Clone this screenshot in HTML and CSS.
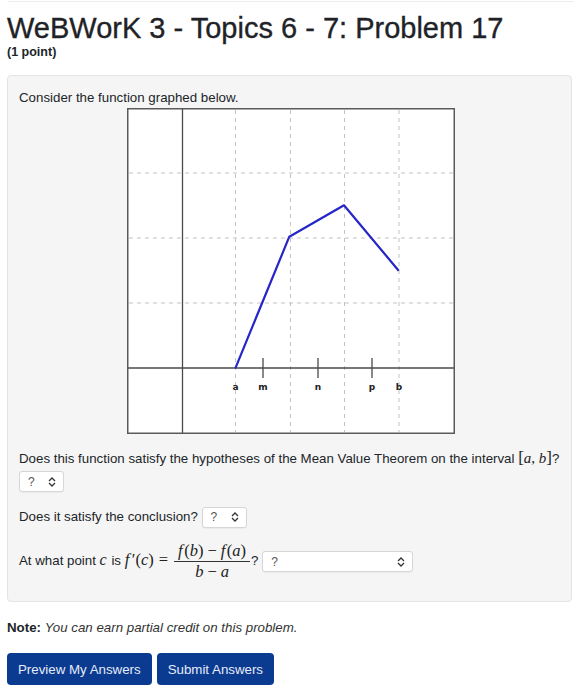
FILE: index.html
```html
<!DOCTYPE html>
<html lang="en">
<head>
<meta charset="utf-8">
<title>WeBWorK 3 - Topics 6 - 7: Problem 17</title>
<link rel="stylesheet" href="styles.css">
</head>
<body>
<div class="topline"></div>
<main class="page">
  <h1 class="title">WeBWorK 3 - Topics 6 - 7: Problem 17</h1>
  <div class="points">(1 point)</div>

  <section class="problem">
    <p class="intro">Consider the function graphed below.</p>

    <div class="graph">
      <svg class="plot" width="328" height="326" viewBox="0 0 328 326">
        <rect x="0" y="0" width="328" height="326" fill="#ffffff"/>
        <g stroke="#c4c4c4" stroke-width="1" stroke-dasharray="4 4" fill="none">
          <line x1="108.5" y1="2" x2="108.5" y2="324"/>
          <line x1="163.5" y1="2" x2="163.5" y2="324"/>
          <line x1="217.5" y1="2" x2="217.5" y2="324"/>
          <line x1="272" y1="2" x2="272" y2="324"/>
          <line x1="2" y1="65" x2="326" y2="65"/>
          <line x1="2" y1="130" x2="326" y2="130"/>
          <line x1="2" y1="195" x2="326" y2="195"/>
        </g>
        <g stroke="#4a4a4a" stroke-width="1.3" fill="none">
          <line x1="55.5" y1="0" x2="55.5" y2="326"/>
          <line x1="0" y1="260" x2="328" y2="260"/>
          <line x1="136" y1="250" x2="136" y2="270"/>
          <line x1="191" y1="250" x2="191" y2="270"/>
          <line x1="245" y1="250" x2="245" y2="270"/>
        </g>
        <polyline points="108.3,260.3 162.3,128.7 217,97.3 271.7,162.7" fill="none" stroke="#2626c8" stroke-width="2.2" stroke-linejoin="round"/>
        <rect x="0.75" y="0.75" width="326.5" height="324.5" fill="none" stroke="#5a5a5a" stroke-width="1.5"/>
        <g class="ticklabels" font-family="DejaVu Sans, sans-serif" font-weight="bold" font-size="9" text-anchor="middle" fill="#222">
          <text x="108.5" y="282">a</text>
          <text x="136" y="282">m</text>
          <text x="191" y="282">n</text>
          <text x="245" y="282">p</text>
          <text x="272" y="282">b</text>
        </g>
      </svg>
    </div>

    <p class="q q1">Does this function satisfy the hypotheses of the Mean Value Theorem on the interval <span class="math"><span class="br">[</span><i>a</i>, <i>b</i><span class="br">]</span></span>?</p>
    <div class="row r1">
      <span class="sel sel-sm"><span class="selval">?</span><svg class="chev" width="8" height="10" viewBox="0 0 8 10"><path d="M1 4 L4 1 L7 4 M1 6 L4 9 L7 6" fill="none" stroke="#333" stroke-width="1.3"/></svg></span>
    </div>

    <p class="q q2">Does it satisfy the conclusion? <span class="sel sel-sm"><span class="selval">?</span><svg class="chev" width="8" height="10" viewBox="0 0 8 10"><path d="M1 4 L4 1 L7 4 M1 6 L4 9 L7 6" fill="none" stroke="#333" stroke-width="1.3"/></svg></span></p>

    <p class="q q3">At what point <i class="mi">c</i> is <span class="math"><i class="fn">f</i><span class="prime">&#8242;</span>(<i>c</i>)<span class="rel">=</span><span class="frac"><span class="num"><i class="fn">f</i>(<i>b</i>)<span class="op">&#8722;</span><i class="fn">f</i>(<i>a</i>)</span><span class="den"><i>b</i><span class="op">&#8722;</span><i>a</i></span></span></span>? <span class="sel sel-lg"><span class="selval">?</span><svg class="chev" width="8" height="10" viewBox="0 0 8 10"><path d="M1 4 L4 1 L7 4 M1 6 L4 9 L7 6" fill="none" stroke="#333" stroke-width="1.3"/></svg></span></p>
  </section>

  <p class="note"><b>Note:</b> <i>You can earn partial credit on this problem.</i></p>

  <div class="buttons">
    <button class="btn" type="button">Preview My Answers</button>
    <button class="btn" type="button">Submit Answers</button>
  </div>
</main>
</body>
</html>
```

FILE: styles.css
```css
html, body {
  margin: 0;
  padding: 0;
  background: #ffffff;
}

body {
  font-family: "Liberation Sans", Arial, sans-serif;
  font-size: 13.3px;
  color: #212529;
}

.topline {
  margin: 1px 8px 0 8px;
  height: 1px;
  background: #ececec;
}

.page {
  padding: 0 10px 0 7px;
}

.title {
  margin: 10px 0 0 0;
  font-size: 29px;
  font-weight: normal;
  line-height: 32px;
  color: #1f2328;
  -webkit-text-stroke: 0.35px #1f2328;
}

.points {
  font-weight: bold;
  font-size: 12.5px;
  line-height: 16px;
}

.problem {
  margin-top: 15px;
  background: #f5f5f5;
  border: 1px solid #e4e4e4;
  border-radius: 4px;
  padding: 13px 11px 21px 11px;
}

.intro {
  margin: 0;
  line-height: 18px;
}

.graph {
  margin-top: 1px;
  display: flex;
  justify-content: center;
  padding-left: 2px;
}

.plot {
  display: block;
}

.q {
  margin: 0;
}

.q1 {
  margin-top: 15px;
  line-height: 18px;
}

.row {
  display: flex;
}

.r1 {
  margin-top: 3px;
}

.q2 {
  margin-top: 14px;
  line-height: 22px;
}

.q3 {
  margin-top: 15px;
}

.math {
  font-family: "Liberation Serif", "Times New Roman", serif;
  font-size: 15px;
  color: #222;
}

.q3 .math {
  font-size: 16.5px;
}

.math i, .mi {
  font-family: "Liberation Serif", "Times New Roman", serif;
  font-style: italic;
}

.math .fn {
  margin-right: 1.5px;
}

.mi {
  font-size: 16px;
  margin-right: 1px;
}

.prime {
  margin-left: 1px;
}

.rel {
  margin: 0 5px;
}

.op {
  margin: 0 4px;
}

.br {
  font-size: 17px;
  font-weight: 300;
}

.frac {
  display: inline-flex;
  flex-direction: column;
  align-items: stretch;
  vertical-align: middle;
  text-align: center;
  margin: 0 1px;
}

.num {
  line-height: 16px;
  padding: 0 4px 2px 4px;
  border-bottom: 1px solid #333;
}

.den {
  line-height: 16px;
  padding-top: 2px;
}

.sel {
  display: inline-flex;
  align-items: center;
  justify-content: space-between;
  box-sizing: border-box;
  height: 21px;
  padding: 0 7px 0 8px;
  background: #ffffff;
  border: 1px solid #d6d6d6;
  border-radius: 3px;
  box-shadow: 0 1px 1px rgba(0, 0, 0, 0.04);
  vertical-align: middle;
}

.sel-sm {
  width: 45px;
}

.sel-lg {
  width: 151px;
}

.selval {
  font-size: 12px;
  color: #555;
  line-height: 1;
}

.chev {
  display: block;
}

.note {
  margin: 17px 0 0 0;
  line-height: 18px;
  font-size: 13.3px;
}

.note i {
  color: #333;
}

.buttons {
  margin-top: 16px;
  display: flex;
  gap: 5px;
}

.btn {
  height: 32px;
  padding: 0 11px;
  border: none;
  border-radius: 4px;
  background: #0b3a91;
  color: #e6ecf8;
  font-family: "Liberation Sans", Arial, sans-serif;
  font-size: 13.3px;
}
```
